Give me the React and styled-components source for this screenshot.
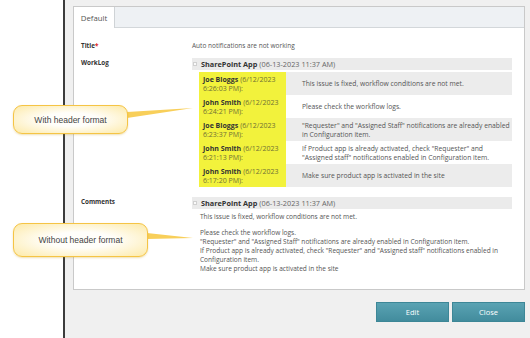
import React from 'react';
import styled, { createGlobalStyle } from 'styled-components';

const GlobalStyle = createGlobalStyle`
  html, body {
    margin: 0;
    padding: 0;
  }
  body {
    width: 530px;
    height: 338px;
    overflow: hidden;
    background: #fff;
    font-family: "Open Sans", "Segoe UI", sans-serif;
  }
  * {
    box-sizing: border-box;
  }
`;

const Page = styled.div`
  position: relative;
  display: flex;
  width: 530px;
  height: 338px;
`;

const Gutter = styled.div`
  flex: none;
  width: 63px;
  background: #fff;
`;

const Window = styled.div`
  flex: 1;
  display: flex;
  flex-direction: column;
  background: #f0f0f0;
  border-left: 2px solid #3c3c3c;
  padding: 6px 5px 0 8px;
`;

const Panel = styled.section`
  height: 284px;
  background: #fff;
  border: 1px solid #c9c9c9;
  display: flex;
  flex-direction: column;
`;

const TabBar = styled.div`
  display: flex;
  height: 21px;
  background: #eef1f4;
  border-bottom: 1px solid #d3d7da;
`;

const Tab = styled.div`
  width: 41px;
  height: 21px;
  margin-bottom: -1px;
  background: #fff;
  border-right: 1px solid #cfd3d6;
  display: flex;
  align-items: center;
  justify-content: center;
  font-size: 7.8px;
  color: #555;
`;

const Form = styled.div`
  padding: 13px 12px 0 7px;
  display: flex;
  flex-direction: column;
`;

const Field = styled.div`
  display: grid;
  grid-template-columns: 111px 1fr;
  margin-top: ${(p) => p.$gap || 0}px;
`;

const Label = styled.div`
  font-size: 6.3px;
  font-weight: 700;
  color: #333;
  line-height: 9px;
`;

const Required = styled.span`
  color: #d22;
`;

const Value = styled.div`
  font-size: 6.5px;
  line-height: 9px;
  color: #555;
`;

const EntryHeader = styled.div`
  display: flex;
  align-items: center;
  height: 12px;
  background: #ebebeb;
  font-size: 7.3px;
  color: #666;
  white-space: nowrap;
`;

const Check = styled.span`
  flex: none;
  width: 4px;
  height: 4px;
  margin: 0 4px 0 1px;
  background: #fafafa;
  border: 1px solid #d0d0d0;
`;

const Author = styled.b`
  color: #333;
  margin-right: 2px;
`;

const Rows = styled.div`
  margin: 2px 0 0 7px;
  display: flex;
  flex-direction: column;
`;

const Row = styled.div`
  display: grid;
  grid-template-columns: 87px 1fr;
  min-height: 23px;
  background: ${(p) => (p.$shaded ? '#ececec' : '#fff')};
`;

const NameCell = styled.div`
  background: #f2f23c;
  padding: 2px 4px;
  display: flex;
  flex-direction: column;
  justify-content: center;
  font-size: 7px;
  line-height: 9px;
  color: #707035;
  white-space: nowrap;
`;

const MessageCell = styled.div`
  padding: 2px 2px 2px 16px;
  display: flex;
  align-items: center;
  font-size: 6.75px;
  line-height: 9px;
  color: #555;
`;

const PlainText = styled.div`
  padding-left: 8px;
  margin-top: ${(p) => p.$gap}px;
  font-size: 6.55px;
  line-height: 9px;
  color: #555;
`;

const Actions = styled.div`
  display: flex;
  justify-content: flex-end;
  gap: 3px;
  margin-top: 12px;
`;

const Button = styled.button`
  width: 73px;
  height: 20px;
  border: 1px solid #3d8797;
  background: linear-gradient(#5aa3b3, #428c9d);
  color: #fff;
  font-family: inherit;
  font-size: 7.5px;
  padding: 0;
`;

const Bubble = styled.div`
  position: absolute;
  left: ${(p) => p.$x}px;
  top: ${(p) => p.$y}px;
  width: ${(p) => p.$w}px;
  height: ${(p) => p.$h}px;
  display: flex;
  align-items: center;
  justify-content: center;
  border: 1.5px solid #f5c445;
  border-radius: 9px;
  background: radial-gradient(ellipse at center, #fffefa 35%, #fdeaa8 100%);
  box-shadow: 0 1px 2px rgba(200, 150, 0, 0.3);
  font-family: "Liberation Sans", Arial, sans-serif;
  font-size: 8.5px;
  color: #444;
`;

const Tails = styled.svg`
  position: absolute;
  left: 0;
  top: 0;
  pointer-events: none;
`;

const log = [
  { name: 'Joe Bloggs', date: '6/12/2023', time: '6:26:03 PM', text: 'This issue is fixed, workflow conditions are not met.' },
  { name: 'John Smith', date: '6/12/2023', time: '6:24:21 PM', text: 'Please check the workflow logs.' },
  {
    name: 'Joe Bloggs',
    date: '6/12/2023',
    time: '6:23:37 PM',
    text: '"Requester" and "Assigned Staff" notifications are already enabled in Configuration item.',
  },
  {
    name: 'John Smith',
    date: '6/12/2023',
    time: '6:21:13 PM',
    text: 'If Product app is already activated, check "Requester" and "Assigned staff" notifications enabled in Configuration item.',
  },
  { name: 'John Smith', date: '6/12/2023', time: '6:17:20 PM', text: 'Make sure product app is activated in the site' },
];

function Header() {
  return (
    <EntryHeader>
      <Check />
      <Author>SharePoint App</Author>
      (06-13-2023 11:37 AM)
    </EntryHeader>
  );
}

export default function App() {
  return (
    <Page>
      <GlobalStyle />
      <Gutter />
      <Window>
        <Panel>
          <TabBar>
            <Tab>Default</Tab>
          </TabBar>
          <Form>
            <Field>
              <Label>
                Title<Required>*</Required>
              </Label>
              <Value>Auto notifications are not working</Value>
            </Field>
            <Field $gap={8}>
              <Label>WorkLog</Label>
              <div>
                <Header />
                <Rows>
                  {log.map((item, i) => (
                    <Row key={i} $shaded={i % 2 === 0}>
                      <NameCell>
                        <div>
                          <Author>{item.name}</Author>({item.date}
                        </div>
                        <div>{item.time}):</div>
                      </NameCell>
                      <MessageCell>{item.text}</MessageCell>
                    </Row>
                  ))}
                </Rows>
              </div>
            </Field>
            <Field $gap={10}>
              <Label>Comments</Label>
              <div>
                <Header />
                <PlainText $gap={3}>This issue is fixed, workflow conditions are not met.</PlainText>
                <PlainText $gap={7}>
                  Please check the workflow logs.
                  <br />
                  "Requester" and "Assigned Staff" notifications are already enabled in Configuration item.
                  <br />
                  If Product app is already activated, check "Requester" and "Assigned staff" notifications enabled in
                  Configuration item.
                  <br />
                  Make sure product app is activated in the site
                </PlainText>
              </div>
            </Field>
          </Form>
        </Panel>
        <Actions>
          <Button>Edit</Button>
          <Button>Close</Button>
        </Actions>
      </Window>

      <Tails width="530" height="338">
        <polygon points="127,112 127,118 193,108" fill="#f8cf5a" />
        <polygon points="147,233 147,239 193,238" fill="#f8cf5a" />
      </Tails>
      <Bubble $x={13} $y={105} $w={115} $h={29}>
        With header format
      </Bubble>
      <Bubble $x={13} $y={223} $w={135} $h={34}>
        Without header format
      </Bubble>
    </Page>
  );
}
